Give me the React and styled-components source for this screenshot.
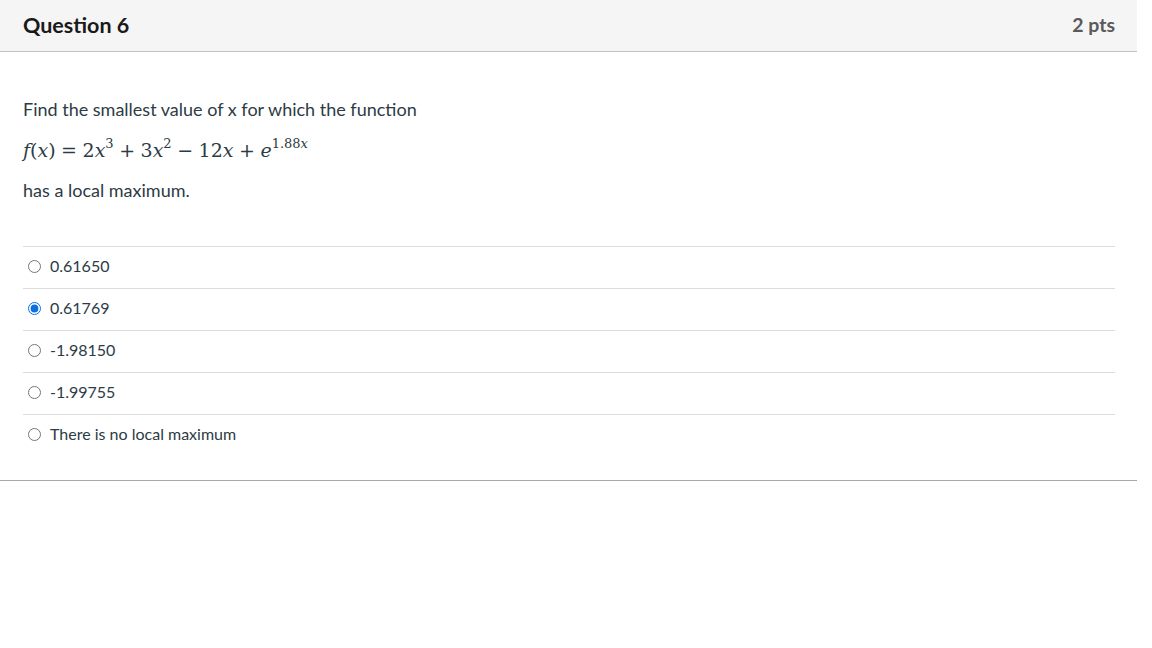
import React from "react";
import styled, { createGlobalStyle } from "styled-components";

const Global = createGlobalStyle`
  html, body { margin: 0; padding: 0; background: #fff; }
  body { font-family: Lato, "Noto Sans", sans-serif; color: #2d3b45; }
`;

const Panel = styled.section`
  width: 1137px;
  border-bottom: 1px solid #a8a8a8;
`;

const Header = styled.header`
  height: 52px;
  box-sizing: border-box;
  background: #f5f5f5;
  border-bottom: 1px solid #c2c2c2;
  display: flex;
  align-items: center;
  justify-content: space-between;
  padding: 0 22px 2px 23px;
`;

const Title = styled.h2`
  margin: 0;
  font-family: Lato, sans-serif;
  font-weight: 700;
  font-size: 21.5px;
  color: #1a1a1a;
`;

const Points = styled.span`
  font-family: Lato, sans-serif;
  font-weight: 700;
  font-size: 19.5px;
  color: #5a5a5a;
`;

const Body = styled.div`
  padding: 45px 22px 24px 23px;
`;

const Para = styled.p`
  margin: 0;
  font-size: 18px;
  line-height: 24px;
  color: #2d3b45;
`;

const Formula = styled.div`
  margin: 16px 0 15px;
  font-family: "DejaVu Serif", serif;
  font-size: 19px;
  line-height: 26px;
  color: #2d3b45;
  white-space: nowrap;
`;

const V = styled.i`
  font-style: italic;
`;

const Op = styled.span`
  margin: 0 5.5px;
`;

const Sup = styled.sup`
  font-size: 13px;
  vertical-align: 9px;
  line-height: 0;
`;

const Answers = styled.ul`
  list-style: none;
  margin: 44px 0 0;
  padding: 0;
`;

const Answer = styled.li`
  height: 42px;
  box-sizing: border-box;
  border-top: 1px solid #dcdcdc;
  display: flex;
  align-items: center;
  padding: 0 0 4px 5px;
`;

const Radio = styled.input`
  width: 13px;
  height: 13px;
  margin: 1px 9px 0 0;
  accent-color: #0b6fe0;
`;

const Label = styled.label`
  font-size: 16px;
  color: #2d3b45;
`;

const answers = ["0.61650", "0.61769", "-1.98150", "-1.99755", "There is no local maximum"];

export default function App() {
  return (
    <>
      <Global />
      <Panel>
        <Header>
          <Title>Question 6</Title>
          <Points>2 pts</Points>
        </Header>
        <Body>
          <Para>Find the smallest value of x for which the function</Para>
          <Formula>
            <V>f</V>(<V>x</V>)<Op>=</Op>2<V>x</V><Sup>3</Sup><Op>+</Op>3<V>x</V>
            <Sup>2</Sup><Op>−</Op>12<V>x</V><Op>+</Op><V>e</V>
            <Sup>
              1.88<V>x</V>
            </Sup>
          </Formula>
          <Para>has a local maximum.</Para>
          <Answers>
            {answers.map((a, i) => (
              <Answer key={a}>
                <Radio type="radio" name="q6" id={`a${i}`} defaultChecked={i === 1} />
                <Label htmlFor={`a${i}`}>{a}</Label>
              </Answer>
            ))}
          </Answers>
        </Body>
      </Panel>
    </>
  );
}
